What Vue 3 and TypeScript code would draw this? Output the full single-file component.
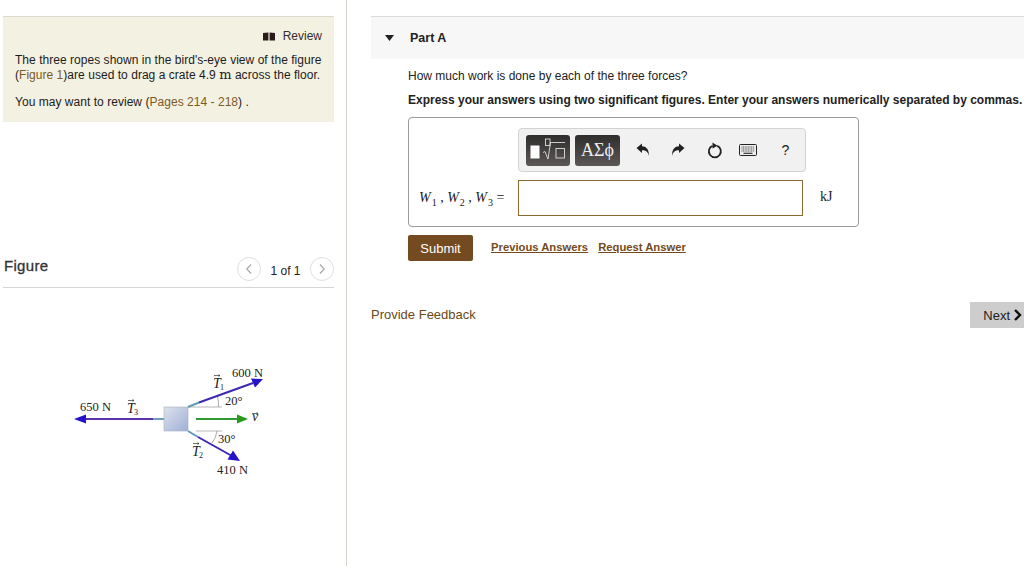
<template>
  <div class="page">
    <aside class="left">
      <div class="intro">
        <div class="review">
          <svg class="book" width="12" height="9" viewBox="0 0 12 9">
            <path d="M0 1 L5.4 0.5 V8.5 L0 8.5 Z M6.6 0.5 L12 1 V8.5 L6.6 8.5 Z" fill="#2b1a1a" />
          </svg>
          <span>Review</span>
        </div>
        <p>The three ropes shown in the bird's-eye view of the figure<br />(<a>Figure 1</a>)are used to drag a crate 4.9 <span class="unit">m</span> across the floor.</p>
        <p class="second">You may want to review (<a>Pages 214 - 218</a>) .</p>
      </div>

      <div class="figure-head">
        <h3>Figure</h3>
        <div class="pager">
          <span class="circle">
            <svg width="8" height="12" viewBox="0 0 8 12"><path d="M6 1.5 L1.8 6 L6 10.5" fill="none" stroke="#a9a9a9" stroke-width="1.2" /></svg>
          </span>
          <span class="count">1 of 1</span>
          <span class="circle">
            <svg width="8" height="12" viewBox="0 0 8 12"><path d="M2 1.5 L6.2 6 L2 10.5" fill="none" stroke="#a9a9a9" stroke-width="1.2" /></svg>
          </span>
        </div>
      </div>

      <svg class="diagram" width="331" height="278" viewBox="3 288 331 278">
        <defs>
          <linearGradient id="crate" x1="0" y1="0" x2="1" y2="1">
            <stop offset="0" stop-color="#dde2ec" />
            <stop offset="1" stop-color="#9fb0d6" />
          </linearGradient>
        </defs>
        <path d="M188 407 H222 M196 431 H222" stroke="#999" stroke-width="0.7" fill="none" />
        <path d="M217 395 Q219 401 218.5 407 M217 431 Q216 438 212 443" stroke="#888" stroke-width="0.7" fill="none" />
        <path d="M153 419 H164" stroke="#6fa0b8" stroke-width="2" />
        <path d="M188 407 L199 402.500" stroke="#5c9cb4" stroke-width="2" />
        <path d="M188 431 L198 437" stroke="#5c9cb4" stroke-width="2" />
        <rect x="164" y="407" width="24" height="24" fill="url(#crate)" stroke="#a9b0bd" stroke-width="0.6" />
        <path d="M153 419 H84" stroke="#5b35a8" stroke-width="2" />
        <path d="M74 419 L86 414.500 V423.500 Z" fill="#2413c8" />
        <path d="M199 402.500 L253 383" stroke="#3d27b4" stroke-width="2" />
        <path d="M263 379 L251 378.500 L255 387.500 Z" fill="#2413c8" />
        <path d="M198 437 L232 456" stroke="#3d27b4" stroke-width="2" />
        <path d="M240 461 L233 450.500 L227.500 459.500 Z" fill="#2413c8" />
        <path d="M196 419 H238" stroke="#2f9a2f" stroke-width="2" />
        <path d="M248 419 L237 414.500 V423.500 Z" fill="#2b9a1c" />

        <text x="232" y="377" class="lbl">600 N</text>
        <text x="80" y="411" class="lbl">650 N</text>
        <text x="217" y="474" class="lbl">410 N</text>
        <text x="225" y="405" class="lbl">20°</text>
        <text x="218" y="443" class="lbl">30°</text>

        <text x="213" y="388" class="lbl ital big">T</text>
        <text x="220" y="390" class="sub">1</text>
        <path d="M214 375.500 H220 M218.500 374.500 L220 375.500 L218.500 376.500" class="vec" />
        <text x="127" y="413" class="lbl ital big">T</text>
        <text x="134" y="415" class="sub">3</text>
        <path d="M128 400.500 H134 M132.500 399.500 L134 400.500 L132.500 401.500" class="vec" />
        <text x="192" y="456" class="lbl ital big">T</text>
        <text x="199" y="458" class="sub">2</text>
        <path d="M193 443.500 H199 M197.500 442.500 L199 443.500 L197.500 444.500" class="vec" />
        <text x="252" y="421" class="lbl ital big">v</text>
        <path d="M252 413.500 H258 M256.500 412.500 L258 413.500 L256.500 414.500" class="vec" />
      </svg>
    </aside>

    <main class="right">
      <div class="part-head">
        <svg width="9" height="6" viewBox="0 0 9 6"><path d="M0 0 H9 L4.500 6 Z" fill="#222" /></svg>
        <span>Part A</span>
      </div>

      <div class="part-body">
        <p class="question">How much work is done by each of the three forces?</p>
        <p class="instruction">Express your answers using two significant figures. Enter your answers numerically separated by commas.</p>

        <div class="answer-box">
          <div class="toolbar">
            <button class="dark tpl">
              <svg width="36" height="24" viewBox="0 0 36 24">
                <rect x="0.500" y="7.500" width="9" height="13" fill="#fff" />
                <rect x="15.500" y="1" width="4.500" height="6.500" fill="none" stroke="#ddd" stroke-width="0.900" />
                <path d="M13 14.500 L15 13.500 L18 21 L20.500 4.500 H35" fill="none" stroke="#ddd" stroke-width="0.900" />
                <rect x="26" y="10.500" width="8.500" height="9.500" fill="none" stroke="#ddd" stroke-width="0.900" />
              </svg>
            </button>
            <button class="dark sym">ΑΣϕ</button>
            <div class="tools">
              <button class="tool" v-for="t in tools" :key="t.name" :class="t.name">
                <svg v-if="t.name === 'undo'" width="14" height="14" viewBox="0 0 14 14">
                  <path d="M0.500 5 L6 0.500 V3.200 C10.500 3.200 13 6.500 13 13 C12 9 10 7.300 6 7.300 V10 Z" fill="#222" />
                </svg>
                <svg v-else-if="t.name === 'redo'" width="14" height="14" viewBox="0 0 14 14">
                  <path d="M13.500 5 L8 0.500 V3.200 C3.500 3.200 1 6.500 1 13 C2 9 4 7.300 8 7.300 V10 Z" fill="#222" />
                </svg>
                <svg v-else-if="t.name === 'reset'" width="16" height="17" viewBox="0 0 16 17">
                  <path d="M10.200 3.800 A6 6 0 1 1 5.500 3.800" fill="none" stroke="#222" stroke-width="1.800" />
                  <path d="M5.500 0.500 L10.500 3.800 L5.500 6.500 Z" fill="#222" />
                </svg>
                <svg v-else-if="t.name === 'keys'" width="18" height="12" viewBox="0 0 18 12">
                  <rect x="0.500" y="0.500" width="17" height="11" rx="1" fill="#eee" stroke="#222" />
                  <path d="M2.500 3 H15.500 M2.500 5 H15.500 M2.500 7 H15.500" stroke="#444" stroke-width="1.200" stroke-dasharray="1 0.600" />
                  <path d="M4.500 9.300 H13.500" stroke="#333" stroke-width="1.200" />
                </svg>
                <span v-else class="help">?</span>
              </button>
            </div>
          </div>

          <div class="input-row">
            <span class="label"><i>W</i><sub>1</sub> , <i>W</i><sub>2</sub> , <i>W</i><sub>3</sub> =</span>
            <div class="input"></div>
            <span class="unit-kj">kJ</span>
          </div>
        </div>

        <div class="actions">
          <button class="submit">Submit</button>
          <a class="action-link">Previous Answers</a>
          <a class="action-link">Request Answer</a>
        </div>
      </div>

      <div class="footer">
        <a class="feedback">Provide Feedback</a>
        <button class="next">Next
          <svg width="9" height="12" viewBox="0 0 9 12"><path d="M2 1 L7 6 L2 11" fill="none" stroke="#111" stroke-width="2.400" /></svg>
        </button>
      </div>
    </main>
  </div>
</template>

<script setup lang="ts">
const tools: { name: string }[] = [
  { name: 'undo' },
  { name: 'redo' },
  { name: 'reset' },
  { name: 'keys' },
  { name: 'help' }
]
</script>

<style>
html,
body {
  margin: 0;
  overflow: hidden;
  background: #fff;
}
</style>

<style scoped>
.page {
  display: flex;
  width: 1024px;
  height: 566px;
  overflow: hidden;
  font-family: "Liberation Sans", Arial, sans-serif;
  font-size: 12px;
  color: #222;
}

.left {
  flex: none;
  box-sizing: border-box;
  width: 347px;
  padding: 16px 12px 0 3px;
  border-right: 1px solid #d8d4ce;
}

.intro {
  box-sizing: border-box;
  height: 106px;
  padding: 12px 12px 0 12px;
  background: #f3f1e2;
  border-top: 1px solid #dcdad0;
}

.review {
  display: flex;
  justify-content: flex-end;
  align-items: center;
  gap: 8px;
  color: #3a2c2c;
  line-height: 14px;
}

.intro p {
  margin: 10px 0 0;
  line-height: 15px;
  color: #1c1c1c;
  letter-spacing: 0.035px;
}

.intro p.second {
  margin-top: 12px;
}

.intro a {
  color: #7d5a1e;
}

.unit {
  font-family: "DejaVu Serif", serif;
  font-size: 13px;
  line-height: 12px;
}

.figure-head {
  display: flex;
  justify-content: space-between;
  align-items: center;
  height: 44px;
  margin-top: 122px;
  box-sizing: border-box;
  border-bottom: 1px solid #d6d6d6;
}

.figure-head h3 {
  margin: 0 0 0 1px;
  font-size: 15px;
  font-weight: normal;
  letter-spacing: 0.3px;
  color: #333;
  -webkit-text-stroke: 0.3px #333;
}

.pager {
  display: flex;
  align-items: center;
  gap: 9.500px;
  margin-top: 7px;
}

.circle {
  display: flex;
  align-items: center;
  justify-content: center;
  box-sizing: border-box;
  width: 24px;
  height: 24px;
  border: 1px solid #dfdfdf;
  border-radius: 50%;
}

.count {
  margin-top: 3px;
  font-size: 12px;
}

.diagram {
  display: block;
}

.lbl {
  font-family: "Liberation Serif", serif;
  font-size: 12.500px;
  fill: #222;
}

.big {
  font-size: 14px;
}

.ital {
  font-style: italic;
}

.sub {
  font-family: "Liberation Serif", serif;
  font-size: 8px;
  fill: #222;
}

.vec {
  fill: none;
  stroke: #333;
  stroke-width: 0.700;
}

.right {
  flex: 1;
  min-width: 0;
  padding: 16px 0 0 24px;
}

.part-head {
  display: flex;
  align-items: center;
  gap: 16px;
  box-sizing: border-box;
  height: 43px;
  padding-left: 14px;
  background: #f7f7f7;
  border-top: 1px solid #dadada;
  font-size: 12.500px;
  font-weight: bold;
}

.part-body {
  padding: 10px 0 0 37px;
}

.question {
  margin: 0;
  line-height: 14px;
  font-size: 12px;
  white-space: nowrap;
}

.instruction {
  margin: 10px 0 0;
  line-height: 14px;
  font-size: 12px;
  font-weight: bold;
  white-space: nowrap;
}

.answer-box {
  box-sizing: border-box;
  width: 451px;
  height: 110px;
  margin-top: 10px;
  padding: 10px 0 0 10px;
  border: 1px solid #9a9a9a;
  border-radius: 4px;
}

.toolbar {
  display: flex;
  align-items: center;
  gap: 5px;
  box-sizing: border-box;
  width: 288px;
  height: 44px;
  margin-left: 99px;
  padding-left: 7px;
  background: #f1f1f1;
  border: 1px solid #d3d3d3;
  border-radius: 4px;
}

.dark {
  display: flex;
  flex: none;
  align-items: center;
  justify-content: center;
  height: 31px;
  padding: 0;
  border: none;
  border-radius: 3px;
  background: linear-gradient(#2f2d2d, #5c5757);
  color: #eee;
}

.tpl {
  width: 44px;
}

.sym {
  width: 45px;
  font-family: "Liberation Serif", serif;
  font-size: 18px;
}

.tools {
  display: flex;
  align-items: center;
  margin-left: 0;
}

.tool {
  display: flex;
  align-items: center;
  justify-content: center;
  width: 35px;
  height: 31px;
  padding: 0;
  border: none;
  background: none;
}

.tool.reset {
  margin-left: 2px;
  margin-right: -2px;
}

.help {
  margin-left: 2px;
  font-family: "Liberation Sans", Arial, sans-serif;
  font-size: 14px;
  color: #222;
}

.input-row {
  display: flex;
  align-items: center;
  margin-top: 8px;
}

.label {
  flex: none;
  width: 99px;
  font-family: "Liberation Serif", serif;
  font-size: 14px;
  white-space: nowrap;
}

.label i {
  letter-spacing: 1px;
}

.label sub {
  font-size: 10px;
  line-height: 0;
}

.input {
  flex: none;
  box-sizing: border-box;
  width: 285px;
  height: 36px;
  background: #fff;
  border: 1px solid #8a6a2e;
}

.unit-kj {
  margin: -2px 0 0 17px;
  font-family: "Liberation Serif", serif;
  font-size: 14px;
}

.actions {
  display: flex;
  align-items: center;
  margin-top: 8px;
}

.submit {
  width: 65px;
  height: 26px;
  padding: 0;
  border: none;
  border-radius: 2px;
  background: #744b20;
  color: #fff;
  font-family: inherit;
  font-size: 13px;
}

.action-link {
  margin: -2px 0 0 18px;
  color: #744b20;
  font-size: 11.250px;
  font-weight: bold;
  text-decoration: underline;
}

.action-link + .action-link {
  margin-left: 10px;
}

.footer {
  display: flex;
  align-items: center;
  justify-content: space-between;
  margin-top: 41px;
}

.feedback {
  margin-top: -2px;
  color: #6a4a16;
  font-size: 13px;
}

.next {
  display: flex;
  align-items: center;
  justify-content: flex-end;
  gap: 3px;
  box-sizing: border-box;
  width: 54px;
  height: 26px;
  padding: 0 2px 0 0;
  border: none;
  background: #cdcdcd;
  color: #222;
  font-family: inherit;
  font-size: 13px;
}
</style>
